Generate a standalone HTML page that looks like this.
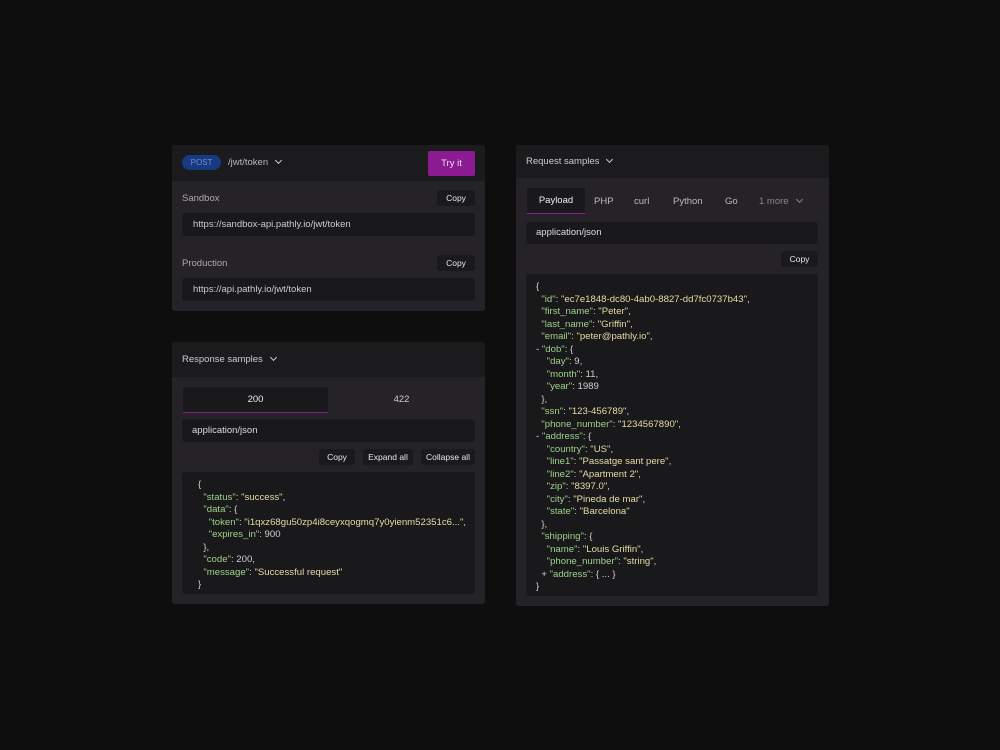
<!DOCTYPE html>
<html><head><meta charset="utf-8"><style>
*{box-sizing:border-box;margin:0;padding:0}
body{width:1000px;height:750px;background:#0e0e0f;font-family:"Liberation Sans",sans-serif;color:#d6d6d8;position:relative;overflow:hidden;font-size:10px}
.p{position:absolute;background:#252327;border-radius:3px;overflow:hidden}
.h{position:absolute;left:0;right:0;top:0;background:#1b1a1c}
.a{position:absolute}
.box{position:absolute;background:#19181a;border-radius:3px}
.btn{position:absolute;background:#1a191b;border-radius:3px;color:#e8e8ea;font-size:8.5px;text-align:center;line-height:16px;height:16px}
.code{font-size:9.6px;line-height:12.5px;white-space:pre;color:#d0d0d2}
.k{color:#9fd28a}.s{color:#e6dca8}
.chev{display:inline-block;width:5px;height:5px;border-right:1.2px solid #ccc;border-bottom:1.2px solid #ccc;transform:rotate(45deg);margin-left:8px;position:relative;top:-2px}
</style></head><body>

<div class="p" style="left:172px;top:145px;width:313px;height:166px">
 <div class="h" style="height:36px"></div>
 <div class="a" style="left:10px;top:10px;width:39px;height:15px;border-radius:8px;background:#173a80;color:#6f8fd8;font-size:8px;line-height:15px;text-align:center">POST</div>
 <div class="a" style="left:56px;top:12px;color:#bbb;font-size:9.5px">/jwt/token<span class="chev"></span></div>
 <div class="a" style="left:256px;top:6px;width:47px;height:25px;background:#8b1a93;border-radius:2px;color:#f0e0f2;font-size:9.5px;line-height:25px;text-align:center">Try it</div>
 <div class="a" style="left:10px;top:48px;color:#aaa;font-size:9.5px">Sandbox</div>
 <div class="btn" style="left:265px;top:45px;width:38px">Copy</div>
 <div class="box" style="left:10px;top:68px;width:293px;height:23px;line-height:23px;padding-left:11px;font-size:9.5px;color:#ccc">https://sandbox-api.pathly.io/jwt/token</div>
 <div class="a" style="left:10px;top:113px;color:#aaa;font-size:9.5px">Production</div>
 <div class="btn" style="left:265px;top:110px;width:38px">Copy</div>
 <div class="box" style="left:10px;top:133px;width:293px;height:23px;line-height:23px;padding-left:11px;font-size:9.5px;color:#ccc">https://api.pathly.io/jwt/token</div>
</div>

<div class="p" style="left:172px;top:342px;width:313px;height:262px">
 <div class="h" style="height:35px"></div>
 <div class="a" style="left:10px;top:12px;color:#ccc;font-size:9.5px">Response samples<span class="chev"></span></div>
 <div class="a" style="left:11px;top:45px;width:145px;height:26px;background:#19181a;border-bottom:1.5px solid #8b1a93;text-align:center;line-height:25px;font-size:9.5px;color:#eee">200</div>
 <div class="a" style="left:156px;top:45px;width:147px;height:26px;text-align:center;line-height:25px;font-size:9.5px;color:#ccc">422</div>
 <div class="box" style="left:10px;top:77px;width:293px;height:23px;line-height:23px;padding-left:10px;font-size:9.5px;color:#ddd">application/json</div>
 <div class="btn" style="left:147px;top:107px;width:36px">Copy</div>
 <div class="btn" style="left:191px;top:107px;width:50px">Expand all</div>
 <div class="btn" style="left:249px;top:107px;width:54px">Collapse all</div>
 <div class="box code" style="left:10px;top:130px;width:293px;height:122px;padding:7px 0 0 16px">{
  <span class="k">"status"</span>: <span class="s">"success"</span>,
  <span class="k">"data"</span>: {
    <span class="k">"token"</span>: <span class="s">"i1qxz68gu50zp4i8ceyxqogmq7y0yienm52351c6..."</span>,
    <span class="k">"expires_in"</span>: 900
  },
  <span class="k">"code"</span>: 200,
  <span class="k">"message"</span>: <span class="s">"Successful request"</span>
}</div>
</div>

<div class="p" style="left:516px;top:145px;width:313px;height:461px">
 <div class="h" style="height:33px"></div>
 <div class="a" style="left:10px;top:11px;color:#ccc;font-size:9.5px">Request samples<span class="chev"></span></div>
 <div class="a" style="left:11px;top:43px;width:58px;height:26px;background:#19181a;border-bottom:1.5px solid #8b1a93;text-align:center;line-height:25px;font-size:9.5px;color:#eee">Payload</div>
 <div class="a" style="left:78px;top:51px;font-size:9.5px;color:#bbb">PHP</div>
 <div class="a" style="left:118px;top:51px;font-size:9.5px;color:#bbb">curl</div>
 <div class="a" style="left:157px;top:51px;font-size:9.5px;color:#bbb">Python</div>
 <div class="a" style="left:209px;top:51px;font-size:9.5px;color:#bbb">Go</div>
 <div class="a" style="left:243px;top:51px;font-size:9.5px;color:#888">1 more<span class="chev" style="border-color:#888"></span></div>
 <div class="box" style="left:10px;top:77px;width:292px;height:22px;line-height:22px;padding-left:10px;font-size:9.5px;color:#ddd">application/json</div>
 <div class="btn" style="left:265px;top:106px;width:37px">Copy</div>
 <div class="box code" style="left:10px;top:129px;width:292px;height:322px;padding:7px 0 0 10px">{
  <span class="k">"id"</span>: <span class="s">"ec7e1848-dc80-4ab0-8827-dd7fc0737b43"</span>,
  <span class="k">"first_name"</span>: <span class="s">"Peter"</span>,
  <span class="k">"last_name"</span>: <span class="s">"Griffin"</span>,
  <span class="k">"email"</span>: <span class="s">"peter@pathly.io"</span>,
- <span class="k">"dob"</span>: {
    <span class="k">"day"</span>: 9,
    <span class="k">"month"</span>: 11,
    <span class="k">"year"</span>: 1989
  },
  <span class="k">"ssn"</span>: <span class="s">"123-456789"</span>,
  <span class="k">"phone_number"</span>: <span class="s">"1234567890"</span>,
- <span class="k">"address"</span>: {
    <span class="k">"country"</span>: <span class="s">"US"</span>,
    <span class="k">"line1"</span>: <span class="s">"Passatge sant pere"</span>,
    <span class="k">"line2"</span>: <span class="s">"Apartment 2"</span>,
    <span class="k">"zip"</span>: <span class="s">"8397.0"</span>,
    <span class="k">"city"</span>: <span class="s">"Pineda de mar"</span>,
    <span class="k">"state"</span>: <span class="s">"Barcelona"</span>
  },
  <span class="k">"shipping"</span>: {
    <span class="k">"name"</span>: <span class="s">"Louis Griffin"</span>,
    <span class="k">"phone_number"</span>: <span class="s">"string"</span>,
  + <span class="k">"address"</span>: { ... }
}</div>
</div>
</body></html>
